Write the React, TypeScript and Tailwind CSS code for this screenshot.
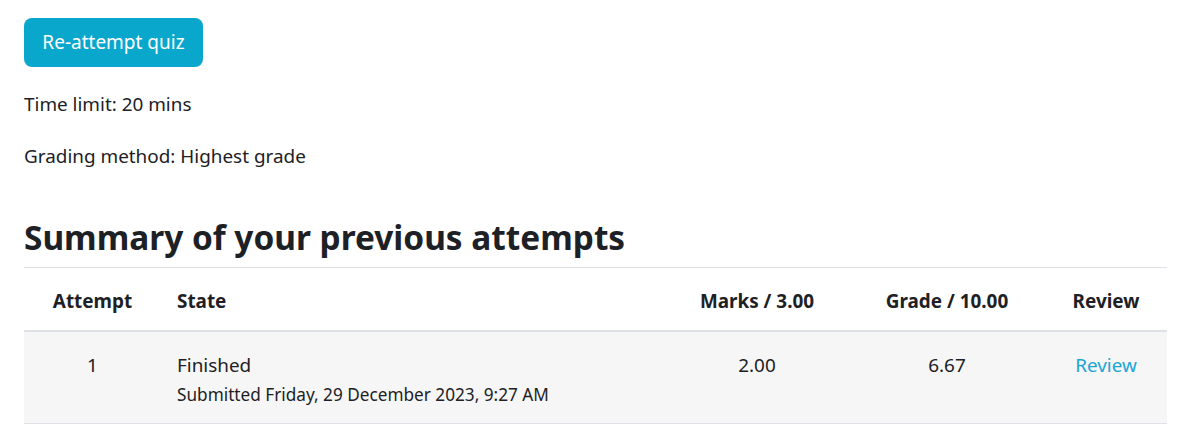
export default function App() {
  return (
    <div className="min-h-screen bg-white px-6 pt-[18px] text-[18.9px] text-[#1d2125] [font-family:'Noto_Sans',sans-serif]">
      <button className="h-[49px] w-[179px] rounded-lg bg-[#0aa7cd] text-[19px] text-white">
        Re-attempt quiz
      </button>
      <p className="mt-[26px] leading-[22px]">Time limit: 20 mins</p>
      <p className="mt-[30px] leading-[22px]">Grading method: Highest grade</p>
      <h2 className="mt-[51px] text-[33.4px] font-bold leading-[38px]">Summary of your previous attempts</h2>
      <table className="mt-[11px] w-full table-fixed border-collapse">
        <colgroup>
          <col className="w-[141px]" />
          <col className="w-[500px]" />
          <col className="w-[184px]" />
          <col className="w-[196px]" />
          <col className="w-[122px]" />
        </colgroup>
        <thead>
          <tr className="border-t border-[#dee2e6]">
            <th className="pl-[10px] pr-[14px] pt-[22px] pb-[18px] text-center font-bold leading-[22px]">Attempt</th>
            <th className="px-3 pt-[22px] pb-[18px] text-left font-bold leading-[22px]">State</th>
            <th className="px-3 pt-[22px] pb-[18px] text-center font-bold leading-[22px]">Marks / 3.00</th>
            <th className="px-3 pt-[22px] pb-[18px] text-center font-bold leading-[22px]">Grade / 10.00</th>
            <th className="px-3 pt-[22px] pb-[18px] text-center font-bold leading-[22px]">Review</th>
          </tr>
        </thead>
        <tbody>
          <tr className="border-t-2 border-b border-[#dee2e6] bg-[#f6f6f6] align-top">
            <td className="pl-[10px] pr-[14px] pt-[22px] pb-[18px] text-center leading-[22px]">1</td>
            <td className="px-3 pt-[22px] pb-[18px] leading-[22px]">
              <div>Finished</div>
              <div className="mt-[9px] text-[17.2px] leading-[20px]">Submitted Friday, 29 December 2023, 9:27 AM</div>
            </td>
            <td className="px-3 pt-[22px] pb-[18px] text-center leading-[22px]">2.00</td>
            <td className="px-3 pt-[22px] pb-[18px] text-center leading-[22px]">6.67</td>
            <td className="px-3 pt-[22px] pb-[18px] text-center leading-[22px]">
              <a href="#" className="text-[#1aa5d4]">Review</a>
            </td>
          </tr>
        </tbody>
      </table>
    </div>
  );
}
